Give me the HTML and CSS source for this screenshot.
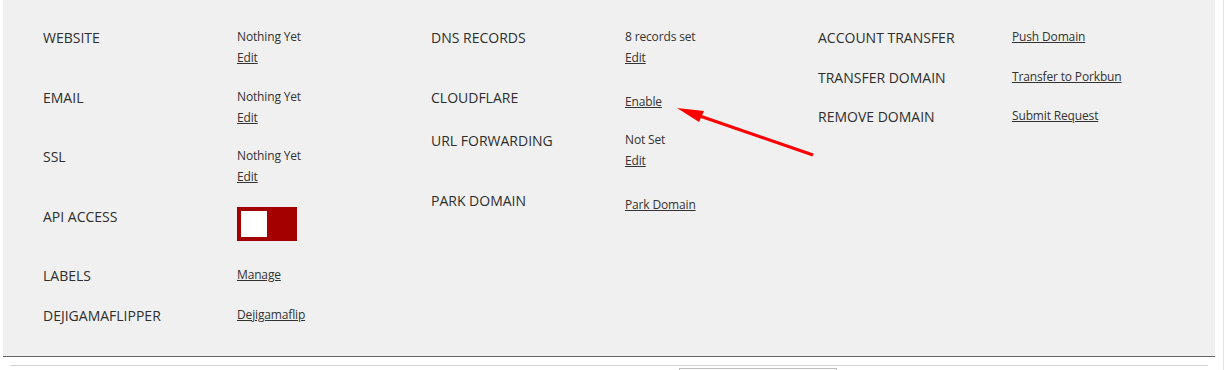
FILE: index.html
```html
<!DOCTYPE html>
<html lang="en">
<head>
  <meta charset="UTF-8">
  <meta name="viewport" content="width=device-width, initial-scale=1.0">
  <title>Domain Details</title>
  <link rel="stylesheet" href="styles.css">
</head>
<body>
  <div class="page">
    <div class="domain-panel">
      <div class="settings">
        <div class="settings-col">
          <div class="setting-row">
            <p class="setting-label">WEBSITE</p>
            <div class="setting-value">
              <p>Nothing Yet</p>
              <a href="#">Edit</a>
            </div>
          </div>
          <div class="setting-row">
            <p class="setting-label">EMAIL</p>
            <div class="setting-value">
              <p>Nothing Yet</p>
              <a href="#">Edit</a>
            </div>
          </div>
          <div class="setting-row">
            <p class="setting-label">SSL</p>
            <div class="setting-value">
              <p>Nothing Yet</p>
              <a href="#">Edit</a>
            </div>
          </div>
          <div class="setting-row">
            <p class="setting-label">API ACCESS</p>
            <div class="setting-value setting-value--toggle">
              <div class="toggle"><div class="toggle-knob"></div></div>
            </div>
          </div>
          <div class="setting-row">
            <p class="setting-label">LABELS</p>
            <div class="setting-value">
              <a href="#">Manage</a>
            </div>
          </div>
          <div class="setting-row">
            <p class="setting-label">DEJIGAMAFLIPPER</p>
            <div class="setting-value">
              <a href="#">Dejigamaflip</a>
            </div>
          </div>
        </div>

        <div class="settings-col">
          <div class="setting-row">
            <p class="setting-label">DNS RECORDS</p>
            <div class="setting-value">
              <p>8 records set</p>
              <a href="#">Edit</a>
            </div>
          </div>
          <div class="setting-row">
            <p class="setting-label">CLOUDFLARE</p>
            <div class="setting-value setting-value--low">
              <a href="#">Enable</a>
            </div>
          </div>
          <div class="setting-row">
            <p class="setting-label">URL FORWARDING</p>
            <div class="setting-value">
              <p>Not Set</p>
              <a href="#">Edit</a>
            </div>
          </div>
          <div class="setting-row">
            <p class="setting-label">PARK DOMAIN</p>
            <div class="setting-value setting-value--low">
              <a href="#">Park Domain</a>
            </div>
          </div>
        </div>

        <div class="settings-col">
          <div class="setting-row">
            <p class="setting-label">ACCOUNT TRANSFER</p>
            <div class="setting-value">
              <a href="#">Push Domain</a>
            </div>
          </div>
          <div class="setting-row">
            <p class="setting-label">TRANSFER DOMAIN</p>
            <div class="setting-value">
              <a href="#">Transfer to Porkbun</a>
            </div>
          </div>
          <div class="setting-row">
            <p class="setting-label">REMOVE DOMAIN</p>
            <div class="setting-value">
              <a href="#">Submit Request</a>
            </div>
          </div>
        </div>
      </div>
    </div>

    <div class="divider"></div>
    <div class="search-box"></div>

    <!-- annotation arrow pointing at Cloudflare "Enable" -->
    <svg class="annotation" width="1225" height="370" viewBox="0 0 1225 370">
      <line x1="813" y1="155" x2="697" y2="115" stroke="#ff0000" stroke-width="3"/>
      <polygon points="677,108 704,111 699,122" fill="#ff0000"/>
    </svg>
  </div>
</body>
</html>
```

FILE: styles.css
```css
/* Domain details panel */
html, body {
  margin: 0;
  padding: 0;
  overflow: hidden;
}

body {
  font-family: 'Open Sans', 'Liberation Sans', sans-serif;
  background-color: #fff;
  color: #333;
}

.page {
  position: relative;
  width: 1223px;
  min-height: 370px;
  border-right: 1px solid #e2e2e2;
}

.domain-panel {
  margin-left: 3px;
  width: 1212px;
  background-color: #f0f0f0;
  border-bottom: 1px solid #666;
  padding: 28px 0 11px;
}

.settings {
  display: grid;
  grid-template-columns: 388px 387px 387px;
  padding-left: 40px;
  align-items: start;
}

.settings-col {
  display: flex;
  flex-direction: column;
}

.setting-row {
  display: grid;
  grid-template-columns: 194px 1fr;
  padding-bottom: 19.5px;
  align-items: start;
}

.setting-label {
  margin: 0;
  font-size: 14px;
  line-height: 20px;
  color: #2e2e2e;
}

.setting-value {
  margin-top: -2px;
  font-size: 12px;
  line-height: 21px;
  letter-spacing: -0.15px;
}

.setting-value p {
  margin: 0;
}

.setting-value a {
  display: block;
  width: max-content;
  color: #333;
  text-decoration: underline;
}

.setting-value--low {
  margin-top: 3px;
}

.setting-value--toggle {
  margin-top: 0;
}

.toggle {
  box-sizing: border-box;
  width: 60px;
  height: 34px;
  padding: 4px;
  margin-bottom: 6px;
  background-color: #a40000;
}

.toggle-knob {
  width: 26px;
  height: 26px;
  background-color: #fff;
}

.divider {
  margin: 8px 0 0 10px;
  width: 1198px;
  height: 1px;
  background-color: #d4d4d4;
}

.search-box {
  margin: 2px 0 0 679px;
  width: 156px;
  height: 10px;
  border: 1px solid #bdbdbd;
  border-bottom: none;
}

.annotation {
  position: absolute;
  top: 0;
  left: 0;
  pointer-events: none;
}
```
